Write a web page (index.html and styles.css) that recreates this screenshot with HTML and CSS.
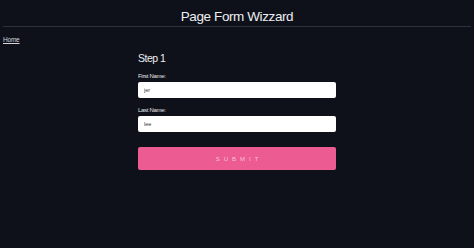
FILE: index.html
```html
<!DOCTYPE html>
<html lang="en">
<head>
<meta charset="utf-8">
<title>Page Form Wizzard</title>
<link rel="stylesheet" href="styles.css">
</head>
<body>
<header class="header">
  <h1 class="title">Page Form Wizzard</h1>
  <hr class="rule">
</header>
<nav class="nav"><a class="nav-link" href="#">Home</a></nav>
<main class="wizard">
  <h2 class="step">Step 1</h2>
  <form class="form">
    <label class="label" for="first">First Name:</label>
    <input class="input" id="first" type="text" value="jer">
    <label class="label label-second" for="last">Last Name:</label>
    <input class="input" id="last" type="text" value="lee">
    <button class="submit" type="button">SUBMIT</button>
  </form>
</main>
</body>
</html>
```
FILE: styles.css
```css
html, body {
  margin: 0;
  padding: 0;
  background: #0f111a;
  height: 100%;
}
body {
  font-family: "Liberation Sans", Arial, sans-serif;
  color: #e6e7ea;
}
.header {
  padding: 0 3px;
}
.title {
  margin: 0;
  padding-top: 9px;
  font-size: 13.5px;
  line-height: 15px;
  font-weight: normal;
  letter-spacing: -0.4px;
  text-align: center;
  color: #eceef2;
}
.rule {
  margin: 2px 0 0;
  border: 0;
  border-top: 1px solid #2c323e;
  height: 0;
}
.nav {
  margin-top: 9px;
  padding-left: 3px;
  font-size: 6.5px;
  line-height: 8px;
}
.nav-link {
  color: #d4d6dc;
  text-decoration: underline;
  letter-spacing: -0.2px;
}
.wizard {
  width: 198px;
  margin: 8px auto 0;
}
.step {
  margin: 0;
  font-size: 10.5px;
  line-height: 12px;
  font-weight: normal;
  letter-spacing: -0.5px;
  color: #eceef2;
}
.form {
  display: flex;
  flex-direction: column;
  margin-top: 8px;
}
.label {
  font-size: 6px;
  line-height: 8px;
  letter-spacing: -0.3px;
  color: #e2e4e8;
}
.label-second {
  margin-top: 8px;
}
.input {
  box-sizing: border-box;
  margin-top: 2px;
  height: 16px;
  border: 0;
  border-radius: 2px;
  background: #ffffff;
  padding: 0 6px;
  font-family: "Liberation Sans", Arial, sans-serif;
  font-size: 5.5px;
  color: #333333;
  outline: none;
}
.submit {
  box-sizing: border-box;
  margin-top: 15px;
  height: 23px;
  border: 0;
  border-radius: 2px;
  background: #ec5b92;
  color: #f6c3d6;
  font-family: "Liberation Sans", Arial, sans-serif;
  font-size: 6px;
  letter-spacing: 4px;
  padding: 0 0 0 4px;
  cursor: pointer;
}
```
